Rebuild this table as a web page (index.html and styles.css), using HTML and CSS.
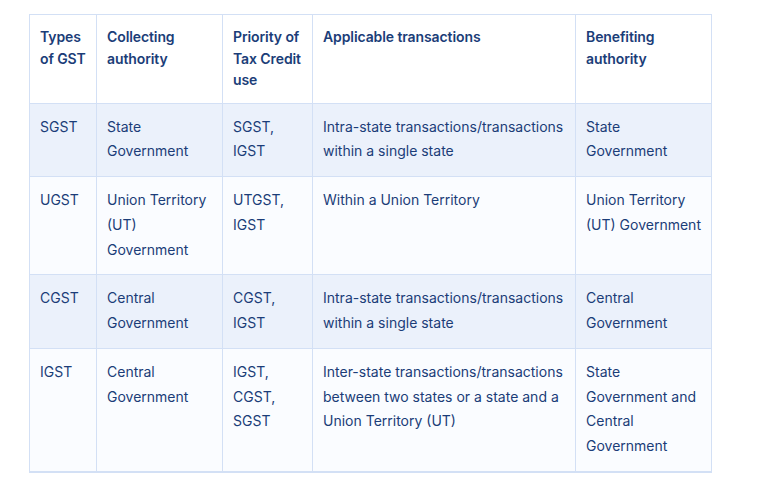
FILE: index.html
```html
<!DOCTYPE html>
<html>
<head>
<meta charset="utf-8">
<link rel="stylesheet" href="styles.css">
</head>
<body>
<table class="gst">
  <colgroup>
    <col class="c1"><col class="c2"><col class="c3"><col class="c4"><col class="c5">
  </colgroup>
  <thead>
    <tr>
      <th>Types of GST</th>
      <th>Collecting authority</th>
      <th>Priority of Tax Credit use</th>
      <th>Applicable transactions</th>
      <th>Benefiting authority</th>
    </tr>
  </thead>
  <tbody>
    <tr class="alt">
      <td>SGST</td>
      <td>State Government</td>
      <td>SGST, IGST</td>
      <td>Intra-state transactions/transactions within a single state</td>
      <td>State Government</td>
    </tr>
    <tr>
      <td>UGST</td>
      <td>Union Territory (UT) Government</td>
      <td>UTGST, IGST</td>
      <td>Within a Union Territory</td>
      <td>Union Territory (UT) Government</td>
    </tr>
    <tr class="alt">
      <td>CGST</td>
      <td>Central Government</td>
      <td>CGST, IGST</td>
      <td>Intra-state transactions/transactions within a single state</td>
      <td>Central Government</td>
    </tr>
    <tr>
      <td>IGST</td>
      <td>Central Government</td>
      <td>IGST, CGST, SGST</td>
      <td>Inter-state transactions/transactions between two states or a state and a Union Territory (UT)</td>
      <td>State Government and Central Government</td>
    </tr>
  </tbody>
</table>
</body>
</html>
```
FILE: styles.css
```css
body {
  margin: 0;
  padding: 14px 0 0 29px;
  background: #ffffff;
  font-family: "Inter", "Noto Sans", sans-serif;
  color: #1b3d78;
}
.gst {
  border-collapse: collapse;
  table-layout: fixed;
  width: 682px;
  border: 1px solid #d3e0f5;
  border-bottom-width: 2px;
  font-size: 14px;
}
.c1 { width: 67px; }
.c2 { width: 126px; }
.c3 { width: 90px; }
.c4 { width: 263px; }
.c5 { width: 136px; }
th, td {
  border: 1px solid #d3e0f5;
  text-align: left;
  vertical-align: top;
  padding: 11px 10px 12px 10px;
}
th:first-child, td:first-child {
  padding-right: 4px;
}
th {
  font-weight: 600;
  line-height: 21.5px;
  background: #ffffff;
  letter-spacing: -0.1px;
}
td {
  line-height: 24.75px;
  background: #fafcff;
}
tr.alt td {
  background: #ebf1fb;
}
```
